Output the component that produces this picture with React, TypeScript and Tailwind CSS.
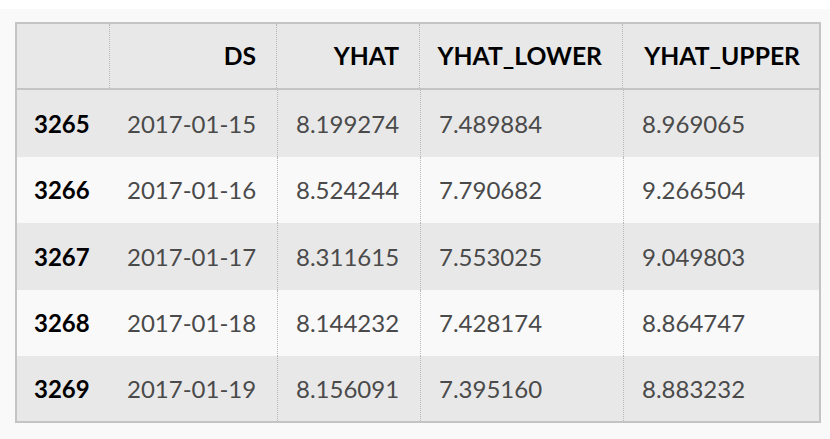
import React from 'react'

const COLUMNS = ['DS', 'YHAT', 'YHAT_LOWER', 'YHAT_UPPER']

const ROWS: [string, string, string, string, string][] = [
  ['3265', '2017-01-15', '8.199274', '7.489884', '8.969065'],
  ['3266', '2017-01-16', '8.524244', '7.790682', '9.266504'],
  ['3267', '2017-01-17', '8.311615', '7.553025', '9.049803'],
  ['3268', '2017-01-18', '8.144232', '7.428174', '8.864747'],
  ['3269', '2017-01-19', '8.156091', '7.395160', '8.883232'],
]

const GRID = 'grid grid-cols-[93px_167px_143px_203px_196px]'

export default function App() {
  return (
    <div className="w-[830px] h-[439px] bg-[#f9f9f9] font-['Lato',sans-serif] text-[24px]">
      <div className="h-[9px] bg-white" />
      <div className="pt-[13px] pl-[15px]">
        <div className="w-[806px] border-2 border-[#c4c4c4]">
          {/* header */}
          <div className={`${GRID} h-[66px] bg-[#e8e8e8] border-b-2 border-[#c4c4c4]`}>
            <div className="border-r border-dotted border-[#b8b8b8]" />
            {COLUMNS.map((c, i) => (
              <div
                key={c}
                className={
                  i < 3
                    ? 'flex items-center justify-end pr-[20px] text-[24.7px] font-bold text-black border-r border-dotted border-[#b8b8b8]'
                    : 'flex items-center justify-end pr-[19px] text-[24.7px] font-bold text-black'
                }
              >
                {c}
              </div>
            ))}
          </div>

          {/* rows */}
          {ROWS.map((row, r) => (
            <div
              key={row[0]}
              className={`${GRID} ${r === 4 ? 'h-[65px]' : r % 2 === 0 ? 'h-[67px]' : 'h-[66px]'} ${
                r % 2 === 0 ? 'bg-[#e8e8e8]' : 'bg-[#f9f9f9]'
              }`}
            >
              <div className="flex items-center pl-[17px] font-bold text-black">{row[0]}</div>
              {row.slice(1).map((v, i) => (
                <div
                  key={i}
                  className={
                    i === 0
                      ? 'flex items-center pl-[17px] text-[#4a4a4a]'
                      : 'flex items-center pl-[18px] text-[#4a4a4a] border-l border-dotted border-[#b8b8b8]'
                  }
                >
                  {v}
                </div>
              ))}
            </div>
          ))}
        </div>
      </div>
    </div>
  )
}
